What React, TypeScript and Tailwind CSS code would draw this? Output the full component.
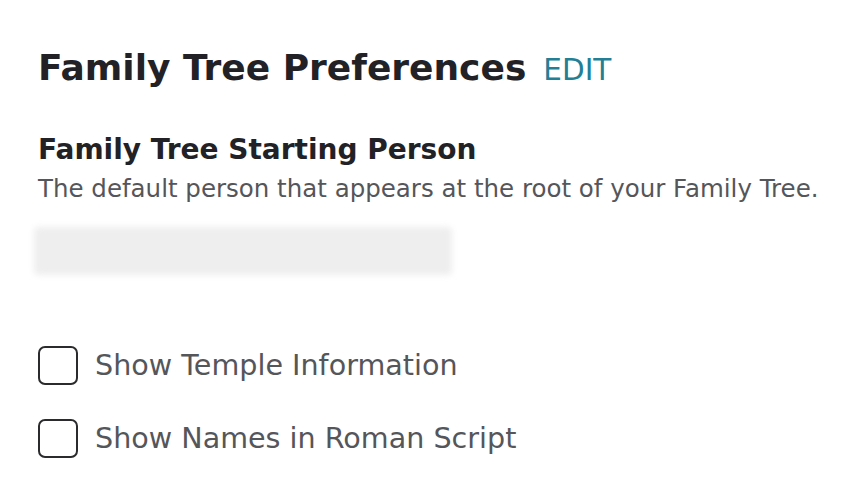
const options = ["Show Temple Information", "Show Names in Roman Script"];

export default function App() {
  return (
    <div className="min-h-screen w-full bg-white px-[38px] pt-[46px] font-['DejaVu_Sans',Verdana,sans-serif]">
      <div className="flex items-baseline gap-[17px]">
        <h1 className="text-[36px] font-bold leading-[44px] text-[#222226]">Family Tree Preferences</h1>
        <button className="text-[29.5px] leading-none text-[#227f96]">EDIT</button>
      </div>

      <h2 className="mt-[45px] text-[28px] font-bold leading-[30px] text-[#222226]">
        Family Tree Starting Person
      </h2>
      <p className="mt-[10px] whitespace-nowrap text-[24.5px] leading-[28px] text-[#55565a]">
        The default person that appears at the root of your Family Tree.
      </p>

      {/* blurred placeholder for the starting person */}
      <div className="-ml-[4px] mt-[24px] h-[48px] w-[418px] rounded-sm bg-[#eeeeef] blur-[3px]" />

      <ul className="mt-[70px] flex flex-col gap-[32px]">
        {options.map((label) => (
          <li key={label} className="flex items-center gap-[17px]">
            <span className="h-[39px] w-[40px] shrink-0 rounded-[7px] border-2 border-[#2b2b2e] bg-white" />
            <span className="text-[28.6px] leading-[41px] text-[#55565a]">{label}</span>
          </li>
        ))}
      </ul>
    </div>
  );
}
